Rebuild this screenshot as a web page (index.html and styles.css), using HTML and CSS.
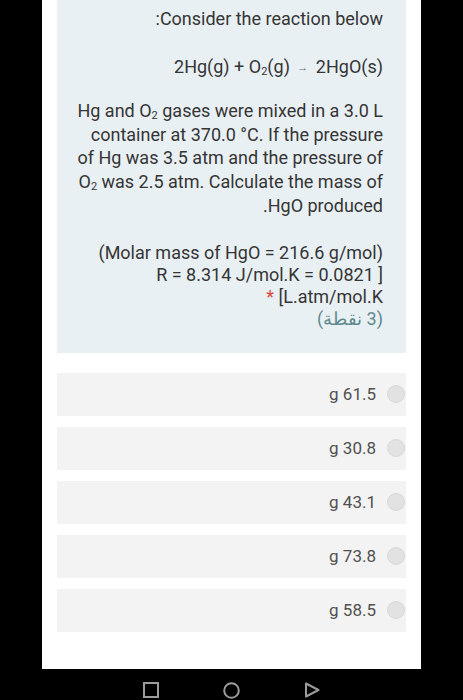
FILE: index.html
```html
<!DOCTYPE html>
<html>
<head>
<meta charset="utf-8">
<link rel="stylesheet" href="styles.css">
</head>
<body>
<div class="panel">
  <div class="question">
    <div class="line title">:Consider the reaction below</div>
    <div class="line eq">2Hg(g) + O<sub>2</sub>(g) <span class="arrow">→</span> 2HgO(s)</div>
    <div class="para">
      Hg and O<sub>2</sub> gases were mixed in a 3.0 L<br>
      container at 370.0 °C. If the pressure<br>
      of Hg was 3.5 atm and the pressure of<br>
      O<sub>2</sub> was 2.5 atm. Calculate the mass of<br>
      .HgO produced
    </div>
    <div class="para2">
      (Molar mass of HgO = 216.6 g/mol)<br>
      R = 8.314 J/mol.K = 0.0821 ]<br>
      <span class="req">*</span> [L.atm/mol.K<br>
      <span class="points" dir="rtl">(3 نقطة)</span>
    </div>
  </div>
  <div class="options">
    <div class="option"><span class="label">g 61.5</span><span class="radio"></span></div>
    <div class="option"><span class="label">g 30.8</span><span class="radio"></span></div>
    <div class="option"><span class="label">g 43.1</span><span class="radio"></span></div>
    <div class="option"><span class="label">g 73.8</span><span class="radio"></span></div>
    <div class="option"><span class="label">g 58.5</span><span class="radio"></span></div>
  </div>
</div>
<div class="navbar">
  <svg class="nav-icon" width="16" height="16" viewBox="0 0 16 16"><rect x="1" y="1" width="14" height="14" fill="none" stroke="#9c9c9c" stroke-width="2"/></svg>
  <svg class="nav-icon" width="17" height="17" viewBox="0 0 17 17"><circle cx="8.5" cy="8.5" r="7.3" fill="none" stroke="#9c9c9c" stroke-width="2"/></svg>
  <svg class="nav-icon" width="16" height="16" viewBox="0 0 16 16"><path d="M2 1.5 L14.5 8 L2 14.5 Z" fill="none" stroke="#9c9c9c" stroke-width="2" stroke-linejoin="round"/></svg>
</div>
</body>
</html>
```

FILE: styles.css
```css
html, body {
  margin: 0;
  padding: 0;
  background: #000;
}
body {
  width: 463px;
  height: 700px;
  overflow: hidden;
  font-family: Roboto, "Noto Sans", Arial, sans-serif;
}
.panel {
  box-sizing: border-box;
  width: 379px;
  height: 669px;
  margin-left: 42px;
  background: #fff;
  padding: 0 15px;
}
.question {
  background: #e9f0f3;
  padding: 7px 23px 23px 12px;
  text-align: right;
  color: #353535;
  font-size: 18px;
  white-space: nowrap;
}
.line {
  line-height: 23px;
}
.eq {
  margin-top: 25px;
  font-size: 18px;
}
.arrow {
  font-size: 11px;
  color: #666;
  vertical-align: 2px;
  margin: 0 3px;
}
sub {
  font-size: 11px;
  line-height: 0;
  vertical-align: -2px;
}
.para {
  margin-top: 20px;
  line-height: 23.7px;
}
.para2 {
  margin-top: 24px;
  line-height: 22px;
}
.req {
  color: #d9453a;
}
.points {
  color: #5f8a8d;
  display: inline-block;
}
.options {
  margin-top: 20px;
  display: flex;
  flex-direction: column;
  gap: 11px;
}
.option {
  height: 43px;
  background: #f3f3f3;
  display: flex;
  align-items: center;
  justify-content: flex-end;
  padding-right: 1px;
  gap: 11px;
}
.label {
  color: #505050;
  font-size: 17px;
}
.radio {
  width: 16px;
  height: 16px;
  border-radius: 50%;
  background: #e2e2e2;
  border: 1px solid #d8d8d8;
}
.navbar {
  height: 31px;
  box-sizing: border-box;
  padding: 13px 0 0 143px;
  display: flex;
  align-items: flex-start;
  gap: 64px;
}
.nav-icon {
  display: block;
}
```
